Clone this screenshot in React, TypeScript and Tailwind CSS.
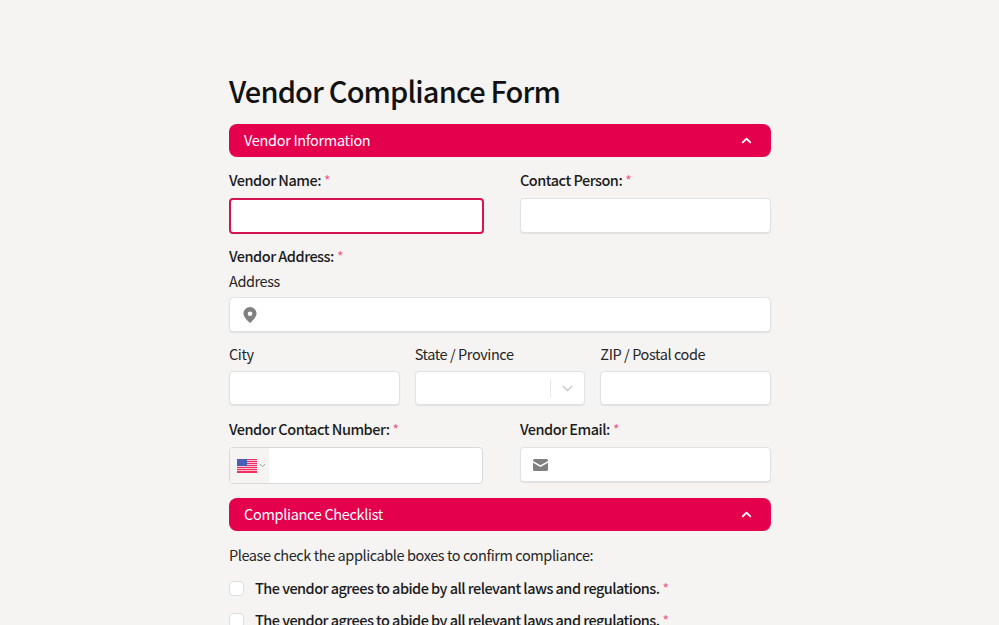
import { ChevronDown, ChevronUp } from "lucide-react";

function Req() {
  return <span className="ml-[3px] text-[14px] font-normal tracking-normal text-[#ee5a88]">*</span>;
}

function FieldLabel({ text }: { text: string }) {
  return (
    <div className="h-[25px] text-[14.5px] leading-[22px] font-medium tracking-[-0.5px] text-[#1c1c1c]">
      {text}
      <Req />
    </div>
  );
}

function SubLabel({ text }: { text: string }) {
  return (
    <div className="h-[25px] text-[14.5px] leading-[22px] tracking-[-0.42px] text-[#262626]">
      {text}
    </div>
  );
}

function Banner({ title }: { title: string }) {
  return (
    <div className="flex h-[33px] items-center justify-between rounded-[8px] bg-[#e5004e] pr-[17px] pl-[15px] text-white">
      <span className="text-[14.5px] leading-none tracking-[-0.32px]">{title}</span>
      <ChevronUp size={15} strokeWidth={3} />
    </div>
  );
}

const inputBox =
  "h-[35px] rounded-[4px] border border-[#e1e1e1] bg-white shadow-[0_1px_1px_rgba(0,0,0,0.08)]";

function CheckRow() {
  return (
    <div className="flex h-[32px] shrink-0 items-center">
      <div className="h-[15px] w-[15px] rounded-[4px] border border-[#dedede] bg-white" />
      <div className="ml-[11px] h-[25px] text-[14.5px] leading-[23px] font-medium tracking-[-0.54px] text-[#1c1c1c]">
        The vendor agrees to abide by all relevant laws and regulations.
        <Req />
      </div>
    </div>
  );
}

function PinIcon() {
  return (
    <svg width="14" height="16" viewBox="0 0 14 16">
      <path
        fillRule="evenodd"
        fill="#808080"
        d="M7 0a6.6 6.6 0 0 0-6.6 6.6C.4 10.6 7 16 7 16s6.6-5.4 6.6-9.4A6.6 6.6 0 0 0 7 0zm0 4.4a2.3 2.3 0 1 1 0 4.6 2.3 2.3 0 0 1 0-4.6z"
      />
    </svg>
  );
}

function MailIcon() {
  return (
    <svg width="15" height="12" viewBox="0 0 15 12">
      <path
        fill="#808080"
        d="M1.5 0h12A1.5 1.5 0 0 1 15 1.5v.6L7.5 6.2 0 2.100v-.6A1.500 1.500 0 0 1 1.500 0zM0 3.800l7.500 4.100L15 3.800v6.700a1.500 1.500 0 0 1-1.500 1.500h-12A1.500 1.500 0 0 1 0 10.500z"
      />
    </svg>
  );
}

function UsFlag() {
  return (
    <svg width="20" height="14" viewBox="0 0 20 14">
      <rect width="20" height="14" fill="#f9c4d2" />
      <rect y="0" width="20" height="1" fill="#ef2f62" />
      <rect y="2" width="20" height="1" fill="#ef2f62" />
      <rect y="4" width="20" height="1" fill="#ef2f62" />
      <rect y="6" width="20" height="1" fill="#ef2f62" />
      <rect y="8" width="20" height="1" fill="#ef2f62" />
      <rect y="10" width="20" height="1" fill="#ef2f62" />
      <rect y="12" width="20" height="2" fill="#ef2f62" />
      <rect width="10" height="7" fill="#4a60b8" />
    </svg>
  );
}

export default function App() {
  return (
    <div className="h-screen overflow-hidden bg-[#f5f4f3] font-['Noto_Sans_CJK_JP','Noto_Sans',sans-serif]">
      <div className="ml-[229px] flex w-[542px] flex-col pt-[71px]">
        <h1 className="h-[53px] text-[29px] leading-[38px] font-medium tracking-[-0.85px] text-[#111]">
          Vendor Compliance Form
        </h1>

        <Banner title="Vendor Information" />

        <div className="mt-[12px] grid grid-cols-[255px_251px] gap-x-[36px]">
          <div>
            <FieldLabel text="Vendor Name:" />
            <div className="mt-[4px] h-[36px] rounded-[4px] border-2 border-[#d6124f] bg-white" />
          </div>
          <div>
            <FieldLabel text="Contact Person:" />
            <div className={`mt-[4px] ${inputBox}`} />
          </div>
        </div>

        <div className="mt-[11px]">
          <FieldLabel text="Vendor Address:" />
          <SubLabel text="Address" />
          <div className={`mt-[2px] flex items-center pl-[13px] ${inputBox}`}>
            <PinIcon />
          </div>
        </div>

        <div className="mt-[10px] grid grid-cols-3 gap-x-[15px]">
          <div>
            <div className="h-[25px] pt-px">
              <SubLabel text="City" />
            </div>
            <div className={`mt-[4px] !h-[34px] ${inputBox}`} />
          </div>
          <div>
            <div className="h-[25px] pt-px">
              <SubLabel text="State / Province" />
            </div>
            <div className={`mt-[4px] flex !h-[34px] items-center justify-end ${inputBox}`}>
              <div className="h-[19px] w-px bg-[#e8e8e8]" />
              <div className="flex w-[33px] justify-center">
                <ChevronDown size={17} strokeWidth={2} className="text-[#cfcfcf]" />
              </div>
            </div>
          </div>
          <div>
            <div className="h-[25px] pt-px">
              <SubLabel text="ZIP / Postal code" />
            </div>
            <div className={`mt-[4px] !h-[34px] ${inputBox}`} />
          </div>
        </div>

        <div className="mt-[13px] grid grid-cols-[255px_251px] gap-x-[36px]">
          <div>
            <FieldLabel text="Vendor Contact Number:" />
            <div className="mt-[4px] flex h-[37px] w-[254px] overflow-hidden rounded-[4px] border border-[#d9d9d9] bg-white">
              <div className="flex w-[39px] items-center gap-[1px] bg-[#f5f4f3] pl-[7px]">
                <UsFlag />
                <ChevronDown size={9} strokeWidth={2.5} className="text-[#999]" />
              </div>
            </div>
          </div>
          <div>
            <FieldLabel text="Vendor Email:" />
            <div className={`mt-[4px] flex items-center pl-[12px] ${inputBox}`}>
              <MailIcon />
            </div>
          </div>
        </div>

        <div className="mt-[14px]">
          <Banner title="Compliance Checklist" />
        </div>

        <div className="mt-[12px] h-[25px] text-[14.5px] leading-[23px] tracking-[-0.42px] text-[#262626]">
          Please check the applicable boxes to confirm compliance:
        </div>
        <div className="mt-[4px] flex flex-col">
          <CheckRow />
          <CheckRow />
        </div>
      </div>
    </div>
  );
}
